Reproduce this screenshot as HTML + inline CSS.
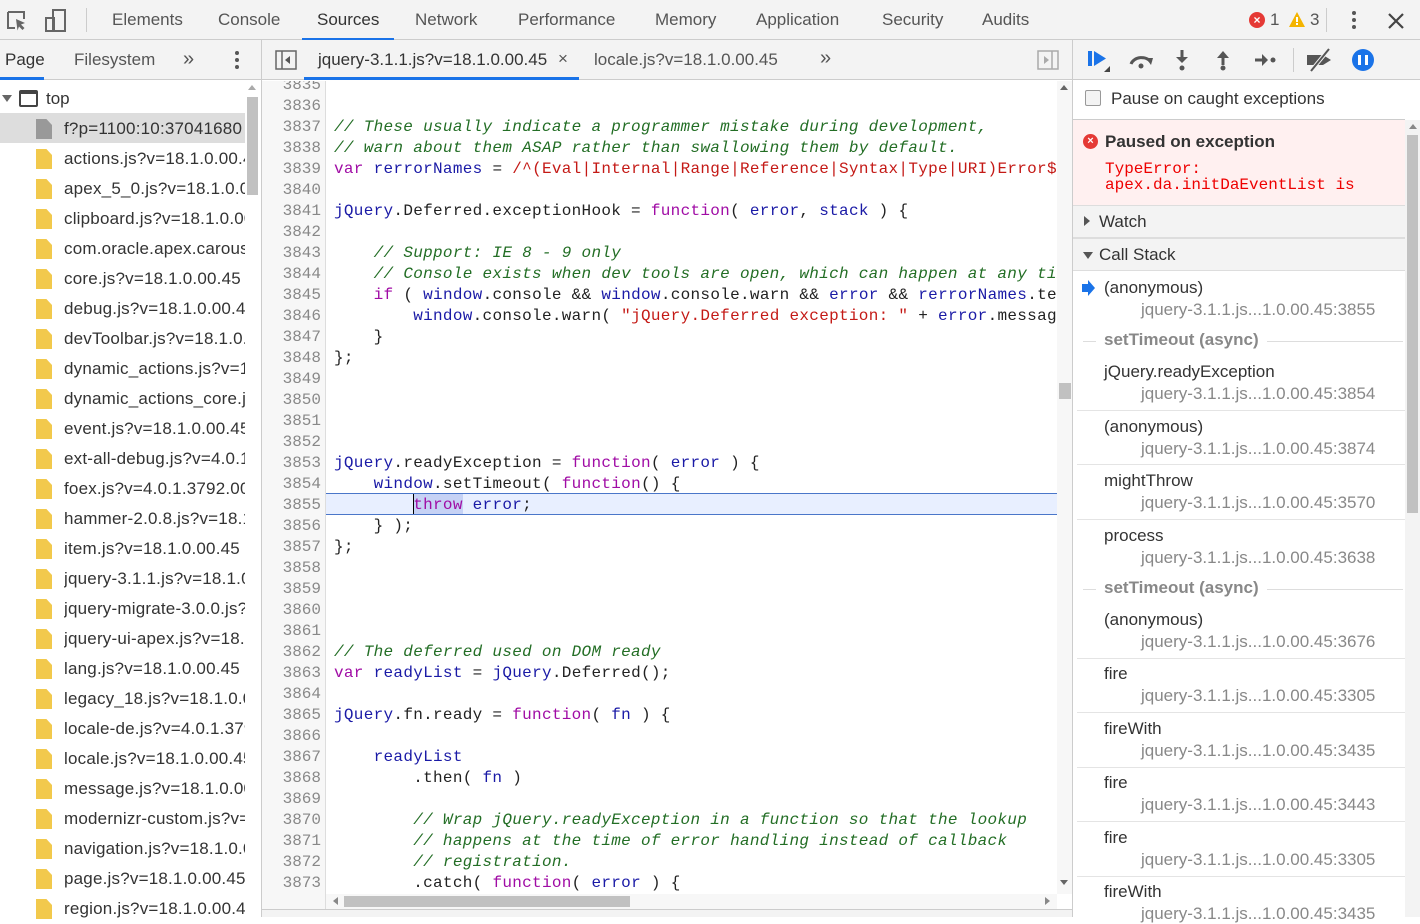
<!DOCTYPE html>
<html><head><meta charset="utf-8"><style>
*{box-sizing:border-box;margin:0;padding:0}
body{width:1420px;height:917px;overflow:hidden;background:#fff;font-family:"Liberation Sans",sans-serif;font-size:17px;color:#333;position:relative}
.a{position:absolute;white-space:nowrap}
pre.a{white-space:pre}
.top{left:0;top:0;width:1420px;height:40px;background:#f3f3f3;border-bottom:1px solid #ccc}
.tab{top:10px;color:#555}
.row2{top:40px;height:40px;background:#f3f3f3;border-bottom:1px solid #ccc}
.code{font-family:"Liberation Mono",monospace;font-size:16px;line-height:21px}
.c{color:#236e25;font-style:italic}.k{color:#a00ca5}.v{color:#1a1aa6}.s{color:#c41a16}
.file{left:36px;width:16px;height:20px;background:#f2c94c;clip-path:polygon(0 0,65% 0,100% 30%,100% 100%,0 100%)}
.ft{left:64px;width:181px;overflow:hidden;letter-spacing:0.2px}
.cs{left:1104px}.cf{left:1141px;color:#888}
.sep{left:1077px;width:328px;height:1px;background:#e4e4e4}
</style></head><body>
<div class="a top"></div>
<svg class="a" style="left:6px;top:10px" width="22" height="22"><path d="M2 2h16v7M2 2v16h7" stroke="#666" fill="none" stroke-width="2"/><path d="M10 9l9 4-4 1.5 3.5 3.5-2 2-3.5-3.5-1.5 4z" fill="#666"/></svg>
<svg class="a" style="left:44px;top:8px" width="24" height="26"><rect x="9" y="2" width="12" height="21" fill="none" stroke="#666" stroke-width="2"/><rect x="2" y="10" width="8" height="13" fill="none" stroke="#666" stroke-width="2"/></svg>
<div class="a" style="left:86px;top:8px;width:1px;height:24px;background:#ccc"></div>
<div class="a tab" style="left:112px">Elements</div>
<div class="a tab" style="left:218px">Console</div>
<div class="a tab" style="left:317px;color:#333">Sources</div>
<div class="a" style="left:302px;top:38px;width:92px;height:3px;background:#1a73e8"></div>
<div class="a tab" style="left:415px">Network</div>
<div class="a tab" style="left:518px">Performance</div>
<div class="a tab" style="left:655px">Memory</div>
<div class="a tab" style="left:756px">Application</div>
<div class="a tab" style="left:882px">Security</div>
<div class="a tab" style="left:982px">Audits</div>
<div class="a" style="left:1249px;top:12px;width:16px;height:16px;border-radius:50%;background:#e53935;color:#fff;font-size:12px;line-height:16px;text-align:center;font-weight:bold">×</div>
<div class="a tab" style="left:1270px">1</div>
<svg class="a" style="left:1288px;top:11px" width="18" height="17"><path d="M9 1L17 16H1z" fill="#f4b400"/><rect x="8" y="6" width="2" height="5" fill="#fff"/><rect x="8" y="12" width="2" height="2" fill="#fff"/></svg>
<div class="a tab" style="left:1310px">3</div>
<div class="a" style="left:1326px;top:8px;width:1px;height:24px;background:#ccc"></div>
<svg class="a" style="left:1348px;top:10px" width="12" height="22"><circle cx="6" cy="3" r="2" fill="#555"/><circle cx="6" cy="10" r="2" fill="#555"/><circle cx="6" cy="17" r="2" fill="#555"/></svg>
<svg class="a" style="left:1387px;top:12px" width="18" height="18"><path d="M2 2L16 16M16 2L2 16" stroke="#444" stroke-width="2.2"/></svg>

<!-- left panel -->
<div class="a row2" style="left:0;width:261px"></div>
<div class="a" style="left:5px;top:50px">Page</div>
<div class="a" style="left:0;top:77px;width:44px;height:3px;background:#1a73e8"></div>
<div class="a" style="left:74px;top:50px;color:#555">Filesystem</div>
<div class="a" style="left:183px;top:48px;color:#555;font-size:20px">»</div>
<svg class="a" style="left:232px;top:50px" width="10" height="22"><circle cx="5" cy="3" r="2" fill="#555"/><circle cx="5" cy="10" r="2" fill="#555"/><circle cx="5" cy="17" r="2" fill="#555"/></svg>
<div class="a" style="left:261px;top:40px;width:1px;height:877px;background:#ccc"></div>
<div class="a" style="left:0;top:113px;width:245px;height:30px;background:#ddd"></div>
<div class="a" style="left:2px;top:95px;width:0;height:0;border-left:5px solid transparent;border-right:5px solid transparent;border-top:7px solid #666"></div>
<div class="a" style="left:19px;top:90px;width:19px;height:17px;border:2px solid #444;border-top-width:4px;border-radius:2px"></div>
<div class="a" style="left:46px;top:89px">top</div>
<div class="a" style="left:247px;top:97px;width:11px;height:98px;background:#c1c1c1"></div>
<div class="a" style="left:248px;top:85px;border-left:4px solid transparent;border-right:4px solid transparent;border-bottom:5px solid #aaa"></div>
<div class="a file" style="top:119px;background:#999"></div><div class="a ft" style="top:119px">f?p=1100:10:37041680</div>
<div class="a file" style="top:149px"></div><div class="a ft" style="top:149px">actions.js?v=18.1.0.00.45</div>
<div class="a file" style="top:179px"></div><div class="a ft" style="top:179px">apex_5_0.js?v=18.1.0.00.45</div>
<div class="a file" style="top:209px"></div><div class="a ft" style="top:209px">clipboard.js?v=18.1.0.00.45</div>
<div class="a file" style="top:239px"></div><div class="a ft" style="top:239px">com.oracle.apex.carousel</div>
<div class="a file" style="top:269px"></div><div class="a ft" style="top:269px">core.js?v=18.1.0.00.45</div>
<div class="a file" style="top:299px"></div><div class="a ft" style="top:299px">debug.js?v=18.1.0.00.45</div>
<div class="a file" style="top:329px"></div><div class="a ft" style="top:329px">devToolbar.js?v=18.1.0.00</div>
<div class="a file" style="top:359px"></div><div class="a ft" style="top:359px">dynamic_actions.js?v=18.1</div>
<div class="a file" style="top:389px"></div><div class="a ft" style="top:389px">dynamic_actions_core.js</div>
<div class="a file" style="top:419px"></div><div class="a ft" style="top:419px">event.js?v=18.1.0.00.45</div>
<div class="a file" style="top:449px"></div><div class="a ft" style="top:449px">ext-all-debug.js?v=4.0.1</div>
<div class="a file" style="top:479px"></div><div class="a ft" style="top:479px">foex.js?v=4.0.1.3792.00</div>
<div class="a file" style="top:509px"></div><div class="a ft" style="top:509px">hammer-2.0.8.js?v=18.1.0</div>
<div class="a file" style="top:539px"></div><div class="a ft" style="top:539px">item.js?v=18.1.0.00.45</div>
<div class="a file" style="top:569px"></div><div class="a ft" style="top:569px">jquery-3.1.1.js?v=18.1.0.00</div>
<div class="a file" style="top:599px"></div><div class="a ft" style="top:599px">jquery-migrate-3.0.0.js?v</div>
<div class="a file" style="top:629px"></div><div class="a ft" style="top:629px">jquery-ui-apex.js?v=18.1</div>
<div class="a file" style="top:659px"></div><div class="a ft" style="top:659px">lang.js?v=18.1.0.00.45</div>
<div class="a file" style="top:689px"></div><div class="a ft" style="top:689px">legacy_18.js?v=18.1.0.00</div>
<div class="a file" style="top:719px"></div><div class="a ft" style="top:719px">locale-de.js?v=4.0.1.3792</div>
<div class="a file" style="top:749px"></div><div class="a ft" style="top:749px">locale.js?v=18.1.0.00.45</div>
<div class="a file" style="top:779px"></div><div class="a ft" style="top:779px">message.js?v=18.1.0.00.45</div>
<div class="a file" style="top:809px"></div><div class="a ft" style="top:809px">modernizr-custom.js?v=18</div>
<div class="a file" style="top:839px"></div><div class="a ft" style="top:839px">navigation.js?v=18.1.0.00</div>
<div class="a file" style="top:869px"></div><div class="a ft" style="top:869px">page.js?v=18.1.0.00.45</div>
<div class="a file" style="top:899px"></div><div class="a ft" style="top:899px">region.js?v=18.1.0.00.45</div>

<!-- editor -->
<div class="a row2" style="left:262px;width:810px"></div>
<svg class="a" style="left:275px;top:50px" width="22" height="20"><rect x="1" y="1" width="20" height="18" fill="none" stroke="#666" stroke-width="1.5"/><path d="M7 1v18" stroke="#666" stroke-width="1.5"/><path d="M15 6l-5 4 5 4z" fill="#555"/></svg>
<div class="a" style="left:318px;top:50px">jquery-3.1.1.js?v=18.1.0.00.45</div>
<div class="a" style="left:558px;top:49px;color:#555">×</div>
<div class="a" style="left:304px;top:77px;width:275px;height:3px;background:#1a73e8"></div>
<div class="a" style="left:594px;top:50px;color:#555">locale.js?v=18.1.0.00.45</div>
<div class="a" style="left:820px;top:47px;color:#555;font-size:20px">»</div>
<svg class="a" style="left:1037px;top:50px" width="22" height="20"><rect x="1" y="1" width="20" height="18" fill="none" stroke="#aaa" stroke-width="1.5"/><path d="M15 1v18" stroke="#aaa" stroke-width="1.5"/><path d="M7 6l5 4-5 4z" fill="#aaa"/></svg>
<div class="a" style="left:1072px;top:40px;width:1px;height:877px;background:#ccc"></div>
<div class="a" style="left:262px;top:81px;width:64px;height:836px;background:#f7f7f7;border-right:1px solid #ddd"></div>
<div class="a" style="left:326px;top:493px;width:731px;height:22px;background:#e8efff;border-top:1px solid #4a76c9;border-bottom:1px solid #4a76c9"></div>
<div class="a" style="left:414px;top:494px;width:49px;height:20px;background:#c6d2f5"></div>
<div class="a" style="left:413px;top:494px;width:1px;height:20px;background:#000"></div>
<div class="a" style="left:262px;top:81px;width:795px;height:813px;overflow:hidden">
<pre class="a code" style="left:0;top:-6px;width:59px;text-align:right;color:#888">3835
3836
3837
3838
3839
3840
3841
3842
3843
3844
3845
3846
3847
3848
3849
3850
3851
3852
3853
3854
3855
3856
3857
3858
3859
3860
3861
3862
3863
3864
3865
3866
3867
3868
3869
3870
3871
3872
3873
3874</pre>
<pre class="a code" style="left:72px;top:-6px;color:#222;letter-spacing:0.3px">&#32;
&#32;
<span class="c">// These usually indicate a programmer mistake during development,</span>
<span class="c">// warn about them ASAP rather than swallowing them by default.</span>
<span class="k">var</span> <span class="v">rerrorNames</span> = <span class="s">/^(Eval|Internal|Range|Reference|Syntax|Type|URI)Error$/</span>;

<span class="v">jQuery</span>.Deferred.exceptionHook = <span class="k">function</span>( <span class="v">error</span>, <span class="v">stack</span> ) {

    <span class="c">// Support: IE 8 - 9 only</span>
    <span class="c">// Console exists when dev tools are open, which can happen at any time</span>
    <span class="k">if</span> ( <span class="v">window</span>.console &amp;&amp; <span class="v">window</span>.console.warn &amp;&amp; <span class="v">error</span> &amp;&amp; <span class="v">rerrorNames</span>.test( error.name ) ) {
        <span class="v">window</span>.console.warn( <span class="s">"jQuery.Deferred exception: "</span> + <span class="v">error</span>.message, error.stack, stack );
    }
};




<span class="v">jQuery</span>.readyException = <span class="k">function</span>( <span class="v">error</span> ) {
    <span class="v">window</span>.setTimeout( <span class="k">function</span>() {
        <span class="k">throw</span> <span class="v">error</span>;
    } );
};




<span class="c">// The deferred used on DOM ready</span>
<span class="k">var</span> <span class="v">readyList</span> = <span class="v">jQuery</span>.Deferred();

<span class="v">jQuery</span>.fn.ready = <span class="k">function</span>( <span class="v">fn</span> ) {

    <span class="v">readyList</span>
        .then( <span class="v">fn</span> )

        <span class="c">// Wrap jQuery.readyException in a function so that the lookup</span>
        <span class="c">// happens at the time of error handling instead of callback</span>
        <span class="c">// registration.</span>
        .catch( <span class="k">function</span>( <span class="v">error</span> ) {
            <span class="v">jQuery</span>.readyException( error );</pre>
</div>
<div class="a" style="left:1057px;top:81px;width:15px;height:813px;background:#f7f7f7"></div>
<div class="a" style="left:1060px;top:85px;border-left:4px solid transparent;border-right:4px solid transparent;border-bottom:5px solid #666"></div>
<div class="a" style="left:1060px;top:880px;border-left:4px solid transparent;border-right:4px solid transparent;border-top:5px solid #666"></div>
<div class="a" style="left:1059px;top:383px;width:12px;height:16px;background:#c1c1c1"></div>
<div class="a" style="left:326px;top:894px;width:731px;height:15px;background:#f7f7f7"></div>
<div class="a" style="left:344px;top:896px;width:286px;height:11px;background:#c1c1c1"></div>
<div class="a" style="left:333px;top:897px;border-top:4px solid transparent;border-bottom:4px solid transparent;border-right:5px solid #888"></div>
<div class="a" style="left:1045px;top:897px;border-top:4px solid transparent;border-bottom:4px solid transparent;border-left:5px solid #888"></div>
<div class="a" style="left:262px;top:909px;width:810px;height:8px;background:#f3f3f3;border-top:1px solid #ccc"></div>

<!-- right panel -->
<div class="a row2" style="left:1073px;width:347px"></div>
<svg class="a" style="left:1087px;top:48px" width="26" height="26"><rect x="1" y="3" width="4" height="15" fill="#1a73e8"/><path d="M7 3l12 7.5L7 18z" fill="#1a73e8"/><path d="M23 18v6h-6z" fill="#444"/></svg>
<svg class="a" style="left:1128px;top:50px" width="28" height="20"><path d="M3 14a11 9 0 0 1 20-2" stroke="#555" stroke-width="3" fill="none"/><path d="M18 8l7 0-2 7z" fill="#555"/><circle cx="13" cy="16" r="2.5" fill="#555"/></svg>
<svg class="a" style="left:1175px;top:48px" width="14" height="24"><path d="M7 2v10" stroke="#555" stroke-width="3"/><path d="M1 9h12L7 15z" fill="#555"/><circle cx="7" cy="20" r="2.5" fill="#555"/></svg>
<svg class="a" style="left:1216px;top:48px" width="14" height="24"><path d="M7 8v9" stroke="#555" stroke-width="3"/><path d="M1 10h12L7 3z" fill="#555"/><circle cx="7" cy="20" r="2.5" fill="#555"/></svg>
<svg class="a" style="left:1254px;top:52px" width="24" height="16"><path d="M1 8h9" stroke="#555" stroke-width="3"/><path d="M8 2v12l6-6z" fill="#555"/><circle cx="19" cy="8" r="2.5" fill="#555"/></svg>
<div class="a" style="left:1293px;top:48px;width:1px;height:24px;background:#ccc"></div>
<svg class="a" style="left:1305px;top:47px" width="30" height="26"><path d="M2 8h16l8 5-8 5H2z" fill="#555"/><path d="M6 24L24 2" stroke="#f3f3f3" stroke-width="4"/><path d="M6 24L24 2" stroke="#555" stroke-width="2"/></svg>
<div class="a" style="left:1352px;top:49px;width:22px;height:22px;border-radius:50%;background:#1a73e8"></div>
<div class="a" style="left:1358px;top:55px;width:3px;height:10px;background:#fff"></div><div class="a" style="left:1365px;top:55px;width:3px;height:10px;background:#fff"></div>
<div class="a" style="left:1085px;top:90px;width:16px;height:16px;border:1px solid #999;border-radius:2px;background:#f3f3f3"></div>
<div class="a" style="left:1111px;top:89px">Pause on caught exceptions</div>
<div class="a" style="left:1073px;top:119px;width:332px;height:1px;background:#ccc"></div>
<div class="a" style="left:1073px;top:120px;width:332px;height:86px;background:#fff0f0"></div>
<div class="a" style="left:1083px;top:134px;width:15px;height:15px;border-radius:50%;background:#e53935;color:#fff;font-size:11px;line-height:15px;text-align:center;font-weight:bold">×</div>
<div class="a" style="left:1105px;top:132px;font-weight:bold;color:#333">Paused on exception</div>
<div class="a code" style="left:1105px;top:161px;color:#e00;line-height:16px">TypeError:<br>apex.da.initDaEventList is</div>
<div class="a" style="left:1073px;top:205px;width:332px;height:33px;background:#f3f3f3;border-top:1px solid #ddd;border-bottom:1px solid #ddd"></div>
<div class="a" style="left:1084px;top:216px;border-top:5px solid transparent;border-bottom:5px solid transparent;border-left:6px solid #555"></div>
<div class="a" style="left:1099px;top:212px">Watch</div>
<div class="a" style="left:1073px;top:238px;width:332px;height:33px;background:#f3f3f3;border-top:1px solid #ddd;border-bottom:1px solid #ddd"></div>
<div class="a" style="left:1083px;top:252px;border-left:5px solid transparent;border-right:5px solid transparent;border-top:7px solid #555"></div>
<div class="a" style="left:1099px;top:245px">Call Stack</div>
<svg class="a" style="left:1081px;top:280px" width="14" height="16"><path d="M1 4h6V0l7 8-7 8v-4H1z" fill="#1a73e8"/></svg>
<div class="a cs" style="top:278px">(anonymous)</div><div class="a cf" style="top:300px">jquery-3.1.1.js...1.0.00.45:3855</div>
<div class="a" style="left:1083px;top:341px;width:320px;height:1px;background:#ddd"></div>
<div class="a" style="left:1096px;top:330px;padding:0 8px;background:#fff;color:#888;font-weight:bold">setTimeout (async)</div>
<div class="a cs" style="top:362px">jQuery.readyException</div><div class="a cf" style="top:384px">jquery-3.1.1.js...1.0.00.45:3854</div>
<div class="a sep" style="top:410px"></div>
<div class="a cs" style="top:417px">(anonymous)</div><div class="a cf" style="top:439px">jquery-3.1.1.js...1.0.00.45:3874</div>
<div class="a sep" style="top:464px"></div>
<div class="a cs" style="top:471px">mightThrow</div><div class="a cf" style="top:493px">jquery-3.1.1.js...1.0.00.45:3570</div>
<div class="a sep" style="top:519px"></div>
<div class="a cs" style="top:526px">process</div><div class="a cf" style="top:548px">jquery-3.1.1.js...1.0.00.45:3638</div>
<div class="a" style="left:1083px;top:589px;width:320px;height:1px;background:#ddd"></div>
<div class="a" style="left:1096px;top:578px;padding:0 8px;background:#fff;color:#888;font-weight:bold">setTimeout (async)</div>
<div class="a cs" style="top:610px">(anonymous)</div><div class="a cf" style="top:632px">jquery-3.1.1.js...1.0.00.45:3676</div>
<div class="a sep" style="top:658px"></div>
<div class="a cs" style="top:664px">fire</div><div class="a cf" style="top:686px">jquery-3.1.1.js...1.0.00.45:3305</div>
<div class="a sep" style="top:712px"></div>
<div class="a cs" style="top:719px">fireWith</div><div class="a cf" style="top:741px">jquery-3.1.1.js...1.0.00.45:3435</div>
<div class="a sep" style="top:767px"></div>
<div class="a cs" style="top:773px">fire</div><div class="a cf" style="top:795px">jquery-3.1.1.js...1.0.00.45:3443</div>
<div class="a sep" style="top:821px"></div>
<div class="a cs" style="top:828px">fire</div><div class="a cf" style="top:850px">jquery-3.1.1.js...1.0.00.45:3305</div>
<div class="a sep" style="top:876px"></div>
<div class="a cs" style="top:882px">fireWith</div><div class="a cf" style="top:904px">jquery-3.1.1.js...1.0.00.45:3435</div>
<div class="a" style="left:1405px;top:120px;width:15px;height:797px;background:#f3f3f3"></div>
<div class="a" style="left:1409px;top:124px;border-left:4px solid transparent;border-right:4px solid transparent;border-bottom:5px solid #888"></div>
<div class="a" style="left:1407px;top:135px;width:11px;height:378px;background:#c1c1c1"></div>
</body></html>
